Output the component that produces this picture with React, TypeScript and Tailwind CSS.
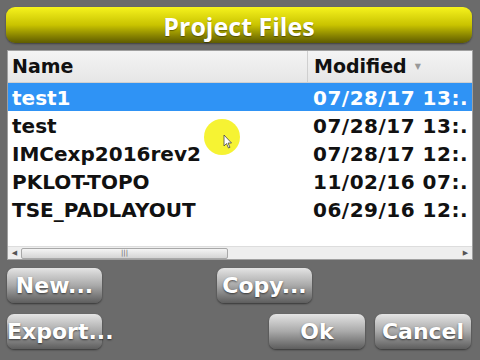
const files = [
  { name: "test1", date: "07/28/17 13:.", selected: true },
  { name: "test", date: "07/28/17 13:." },
  { name: "IMCexp2016rev2", date: "07/28/17 12:." },
  { name: "PKLOT-TOPO", date: "11/02/16 07:." },
  { name: "TSE_PADLAYOUT", date: "06/29/16 12:." },
];

const Btn = ({ label, w }: { label: string; w: string }) => (
  <button
    className={`${w} h-[35px] rounded-[7px] bg-gradient-to-b from-[#e4e4e4] via-[#a9a9a9] to-[#5e5e5e] text-white text-[22px] font-bold leading-none whitespace-nowrap [text-shadow:0_1px_2px_rgba(0,0,0,0.6)] shadow-[0_1px_2px_rgba(0,0,0,0.5)]`}
  >
    {label}
  </button>
);

const App = () => {
  return (
    <div className="relative w-[480px] h-[360px] bg-[#6b6b6b] overflow-hidden font-['DejaVu_Sans',sans-serif]">
      <div className="ml-[6px] mt-[7px] w-[466px] h-[36px] rounded-[9px] bg-gradient-to-b from-[#f6f31c] via-[#c9c300] to-[#5f5c00] flex items-center justify-center shadow-[0_1px_2px_rgba(0,0,0,0.4)]">
        <span className="mt-[3px] text-white text-[25px] font-bold font-['Open_Sans',sans-serif] [text-shadow:0_1px_1px_rgba(0,0,0,0.4)]">
          Project Files
        </span>
      </div>

      <div className="ml-[7px] mt-[7px] w-[466px] h-[210px] bg-white border border-[#a0a0a0] flex flex-col">
        <div className="h-[32px] grid grid-cols-[299px_1fr] bg-gradient-to-b from-[#f4f4f4] to-[#e6e6e6] border-b border-[#d0d0d0]">
          <div className="flex items-center pl-[4px] text-[19px] font-bold text-[#111]">Name</div>
          <div className="flex items-center pl-[6px] border-l border-[#cfcfcf] text-[19px] font-bold text-[#111]">
            Modified
            <span className="ml-[8px] text-[8px] text-[#999]">▼</span>
          </div>
        </div>

        <div className="flex-1">
          {files.map((f) => (
            <div
              key={f.name}
              className={`h-[28px] grid grid-cols-[299px_1fr] items-center text-[20px] font-bold ${
                f.selected ? "bg-[#2f93f5] text-white" : "text-[#111]"
              }`}
            >
              <div className="pl-[4px] whitespace-nowrap">{f.name}</div>
              <div className="pl-[6px] whitespace-nowrap tracking-[0.5px]">{f.date}</div>
            </div>
          ))}
        </div>

        <div className="h-[13px] flex items-center bg-[#eeeeee] border-t border-[#dddddd]">
          <span className="w-[13px] text-[7px] text-[#555] text-center">◀</span>
          <div className="w-[207px] h-[11px] rounded-[2px] bg-gradient-to-b from-[#f4f4f4] to-[#d4d4d4] border border-[#a8a8a8] flex items-center justify-center text-[7px] leading-none text-[#666]">
            |||
          </div>
          <div className="flex-1" />
          <span className="w-[13px] text-[7px] text-[#555] text-center">▶</span>
        </div>
      </div>

      <div className="mt-[8px] ml-[7px] flex gap-[115px]">
        <Btn label="New..." w="w-[95px]" />
        <Btn label="Copy..." w="w-[95px]" />
      </div>
      <div className="mt-[11px] ml-[7px] flex">
        <Btn label="Export..." w="w-[95px]" />
        <div className="ml-[167px] flex gap-[10px]">
          <Btn label="Ok" w="w-[96px]" />
          <Btn label="Cancel" w="w-[96px]" />
        </div>
      </div>

      <div className="absolute left-[204px] top-[119px] w-[36px] h-[36px] rounded-full bg-[#f4f000]/80" />
      <svg className="absolute left-[223px] top-[134px]" width="10" height="16" viewBox="0 0 10 16">
        <path d="M1 1 L1 12 L3.5 9.5 L5.5 14 L7 13.3 L5 9 L8.5 9 Z" fill="#fff" stroke="#444" strokeWidth="0.8" />
      </svg>
    </div>
  );
};

export default App;
